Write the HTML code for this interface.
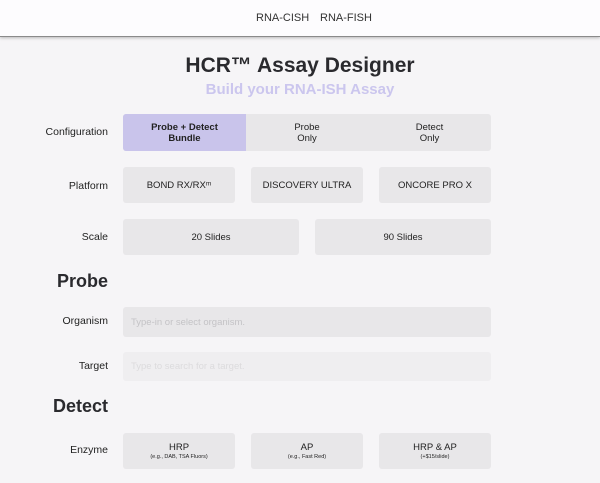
<!DOCTYPE html>
<html><head><style>
*{margin:0;padding:0;box-sizing:border-box}
body{width:600px;height:483px;background:#f6f5f7;font-family:"Liberation Sans",sans-serif;position:relative;overflow:hidden;color:#222}
.hdr{position:absolute;left:0;top:0;width:600px;height:37px;background:#fdfcfe;border-bottom:1px solid #8a8a8a;box-shadow:0 1px 3px rgba(0,0,0,.25)}
.nav{position:absolute;top:12px;font-size:11px;color:#333}
.a{position:absolute}
.lbl{position:absolute;right:492px;font-size:10.5px;color:#222;text-align:right;white-space:nowrap}
.box{position:absolute;background:#e8e7e9;border-radius:3px;display:flex;flex-direction:column;align-items:center;justify-content:center;font-size:9.5px;color:#222;text-align:center;line-height:11px}
.h{position:absolute;right:492px;font-size:18px;font-weight:bold;color:#2a2a2e}
small{font-size:5.5px;line-height:8px}
</style></head><body>
<div class="hdr"><span class="nav" style="left:256px">RNA-CISH</span><span class="nav" style="left:320px">RNA-FISH</span></div>
<div class="a" style="left:0;width:600px;top:54px;text-align:center;font-size:21px;font-weight:bold;color:#2a2a2e">HCR™ Assay Designer</div>
<div class="a" style="left:0;width:600px;top:81px;text-align:center;font-size:15px;font-weight:bold;color:#cbc6ee">Build your RNA-ISH Assay</div>

<div class="lbl" style="top:126px">Configuration</div>
<div class="box" style="left:123px;top:114px;width:368px;height:37px"></div>
<div class="box" style="left:123px;top:114px;width:123px;height:37px;background:#c9c4eb;border-radius:3px 0 0 3px;font-weight:bold">Probe + Detect<br>Bundle</div>
<div class="box" style="left:246px;top:114px;width:122px;height:37px;background:none">Probe<br>Only</div>
<div class="box" style="left:368px;top:114px;width:123px;height:37px;background:none">Detect<br>Only</div>

<div class="lbl" style="top:180px">Platform</div>
<div class="box" style="left:123px;top:167px;width:112px;height:36px">BOND RX/RXᵐ</div>
<div class="box" style="left:251px;top:167px;width:112px;height:36px">DISCOVERY ULTRA</div>
<div class="box" style="left:379px;top:167px;width:112px;height:36px">ONCORE PRO X</div>

<div class="lbl" style="top:231px">Scale</div>
<div class="box" style="left:123px;top:219px;width:176px;height:36px">20 Slides</div>
<div class="box" style="left:315px;top:219px;width:176px;height:36px">90 Slides</div>

<div class="h" style="top:271px">Probe</div>
<div class="lbl" style="top:315px">Organism</div>
<div class="box" style="left:123px;top:307px;width:368px;height:30px;align-items:flex-start;padding-left:8px;color:#c4c3c6">Type-in or select organism.</div>
<div class="lbl" style="top:360px">Target</div>
<div class="box" style="left:123px;top:352px;width:368px;height:29px;background:#efeef0;align-items:flex-start;padding-left:8px;color:#dcdbdd">Type to search for a target.</div>

<div class="h" style="top:396px">Detect</div>
<div class="lbl" style="top:444px">Enzyme</div>
<div class="box" style="left:123px;top:433px;width:112px;height:36px">HRP<small>(e.g., DAB, TSA Fluors)</small></div>
<div class="box" style="left:251px;top:433px;width:112px;height:36px">AP<small>(e.g., Fast Red)</small></div>
<div class="box" style="left:379px;top:433px;width:112px;height:36px">HRP &amp; AP<small>(+$15/slide)</small></div>
</body></html>
